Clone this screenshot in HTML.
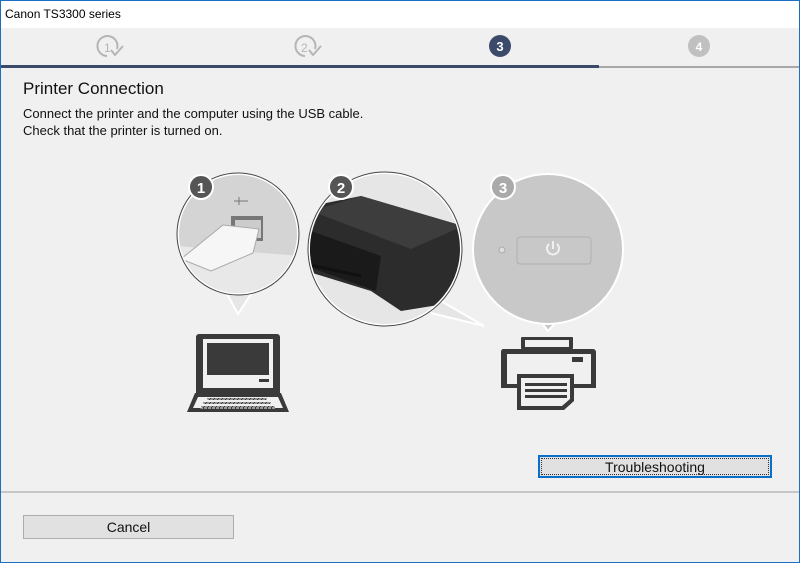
<!DOCTYPE html><html><head><style>
body{margin:0;width:800px;height:563px;overflow:hidden;background:#f0f0f0;font-family:"Liberation Sans",sans-serif;}
.win{position:absolute;left:0;top:0;width:798px;height:561px;border:1px solid #1a6fc0;background:#f0f0f0;}
.title{position:absolute;left:0;top:0;width:798px;height:27px;background:#fff;font-size:12px;line-height:27px;text-indent:4px;color:#000;}
.t{position:absolute;color:#111;}
.btn{position:absolute;background:#e1e1e1;border:1px solid #adadad;font-size:14px;text-align:center;box-sizing:border-box;color:#111}
</style></head><body><div class="win">
<div class="title">Canon TS3300 series</div>
<div style="position:absolute;left:0;top:64px;width:598px;height:3px;background:#3b4a6b"></div>
<div style="position:absolute;left:598px;top:65px;width:200px;height:2px;background:#a8a8a8"></div>
<svg style="position:absolute;left:0;top:27px" width="798" height="38">
<g fill="none" stroke="#b5b5b5" stroke-width="2">
<path d="M116 21 A10 10 0 1 0 106 28"/><path d="M110 22l4 5 8-9"/>
<path d="M314 21 A10 10 0 1 0 304 28"/><path d="M308 22l4 5 8-9"/></g>
<text x="103" y="24" font-size="12" fill="#b5b5b5" font-family="Liberation Sans">1</text>
<text x="300" y="24" font-size="12" fill="#b5b5b5" font-family="Liberation Sans">2</text>
<circle cx="499" cy="18" r="11" fill="#3b4a6b"/><text x="499" y="23" font-size="13" font-weight="bold" fill="#fff" text-anchor="middle" font-family="Liberation Sans">3</text>
<circle cx="698" cy="18" r="11" fill="#c0c0c0"/><text x="698" y="23" font-size="12" font-weight="bold" fill="#fff" text-anchor="middle" font-family="Liberation Sans">4</text>
</svg>
<div class="t" style="left:22px;top:78px;font-size:17px">Printer Connection</div>
<div class="t" style="left:22px;top:104px;font-size:13px;line-height:17px">Connect the printer and the computer using the USB cable.<br>Check that the printer is turned on.</div>
<svg style="position:absolute;left:0;top:0" width="798" height="450">
<defs><clipPath id="c1"><circle cx="237" cy="233" r="59"/></clipPath><clipPath id="c2"><circle cx="384" cy="248" r="75"/></clipPath></defs>
<g stroke="#fff" stroke-width="2">
<path d="M225 291 L237 313 L252 290" fill="#e6e6e6"/>
<circle cx="237" cy="233" r="60" fill="#d4d4d4"/>
<path d="M440 300 L483 325 L430 312" fill="#e6e6e6"/>
<circle cx="384" cy="248" r="76" fill="#e6e6e6"/>
<path d="M538 318 L547 330 L558 318" fill="#c8c8c8"/>
<circle cx="547" cy="248" r="75" fill="#c8c8c8"/>
</g>
<g stroke="#444" stroke-width="1" fill="none">
<circle cx="237" cy="233" r="61"/><circle cx="384" cy="248" r="77"/></g>
<g clip-path="url(#c1)">
<path d="M176 245 L300 255 L300 300 L176 300 Z" fill="#e8e8e8"/>
<rect x="230" y="215" width="32" height="25" fill="#777"/><rect x="234" y="219" width="26" height="18" fill="#ccc"/>
<path d="M180 258 L222 224 L258 228 L252 252 L210 270 Z" fill="#f6f6f6" stroke="#aaa"/>
<path d="M233 200h14m-9-4v8" stroke="#777" fill="none"/>
</g>
<g clip-path="url(#c2)">
<path d="M310 205 L360 195 L462 225 L462 300 L400 310 L370 290 L305 270 Z" fill="#2c2c2c"/>
<path d="M360 195 L462 225 L410 248 L310 210 Z" fill="#3d3d3d"/>
<path d="M310 230 L380 255 L375 290 L305 265Z" fill="#1a1a1a"/>
<path d="M300 262 L360 275" stroke="#111" stroke-width="3"/>
</g>
<rect x="516" y="236" width="74" height="27" rx="3" fill="none" stroke="#b0b0b0"/>
<circle cx="501" cy="249" r="3" fill="#ddd" stroke="#aaa"/>
<path d="M548 243 A6 6 0 1 0 556 243 M552 240v8" stroke="#f0f0f0" stroke-width="2" fill="none"/>
<circle cx="200" cy="186" r="12" fill="#555" stroke="#fff" stroke-width="2"/><text x="200" y="192" text-anchor="middle" font-size="15" font-weight="bold" fill="#fff" font-family="Liberation Sans">1</text>
<circle cx="340" cy="186" r="12" fill="#555" stroke="#fff" stroke-width="2"/><text x="340" y="192" text-anchor="middle" font-size="15" font-weight="bold" fill="#fff" font-family="Liberation Sans">2</text>
<circle cx="502" cy="186" r="12" fill="#aaa" stroke="#fff" stroke-width="2"/><text x="502" y="192" text-anchor="middle" font-size="15" font-weight="bold" fill="#fff" font-family="Liberation Sans">3</text>
<g fill="#3a3a3a">
<path d="M198 333h78a3 3 0 0 1 3 3v56h-84v-56a3 3 0 0 1 3-3zm4 5v49h70v-49z" fill-rule="evenodd"/>
<rect x="206" y="342" width="62" height="32"/><rect x="258" y="378" width="10" height="3"/>
<path d="M194 392h86l8 19h-102z"/>
</g>
<g fill="#f0f0f0"><path d="M197 396h80l5 11h-90z"/></g>
<g fill="#3a3a3a" stroke="#f0f0f0" stroke-width="1" stroke-dasharray="3 1">
<rect x="206" y="397" width="60" height="2"/><rect x="202" y="401" width="68" height="2"/><rect x="200" y="405" width="74" height="2"/></g>
<g fill="#3a3a3a">
<rect x="520" y="336" width="52" height="12" rx="1"/><rect x="524" y="339" width="44" height="7" fill="#f0f0f0"/>
<path d="M502 348h90a3 3 0 0 1 3 3v36h-95v-36a3 3 0 0 1 2-3z"/>
<rect x="506" y="353" width="84" height="30" fill="#f0f0f0"/>
<rect x="571" y="356" width="11" height="5"/>
<path d="M516 373h57v27l-10 9h-47z"/>
<path d="M520 377h49v21l-8 7h-41z" fill="#f0f0f0"/>
<rect x="524" y="382" width="42" height="3"/><rect x="524" y="388" width="42" height="3"/><rect x="524" y="394" width="42" height="3"/>
</g>
</svg>
<div class="btn" style="left:537px;top:454px;width:234px;height:23px;line-height:21px;border:2px solid #0b6fc9;outline:1px dotted #333;outline-offset:-4px">Troubleshooting</div>
<div style="position:absolute;left:0;top:490px;width:798px;height:2px;background:#c6c6c6"></div>
<div class="btn" style="left:22px;top:514px;width:211px;height:24px;line-height:22px">Cancel</div>
</div></body></html>
